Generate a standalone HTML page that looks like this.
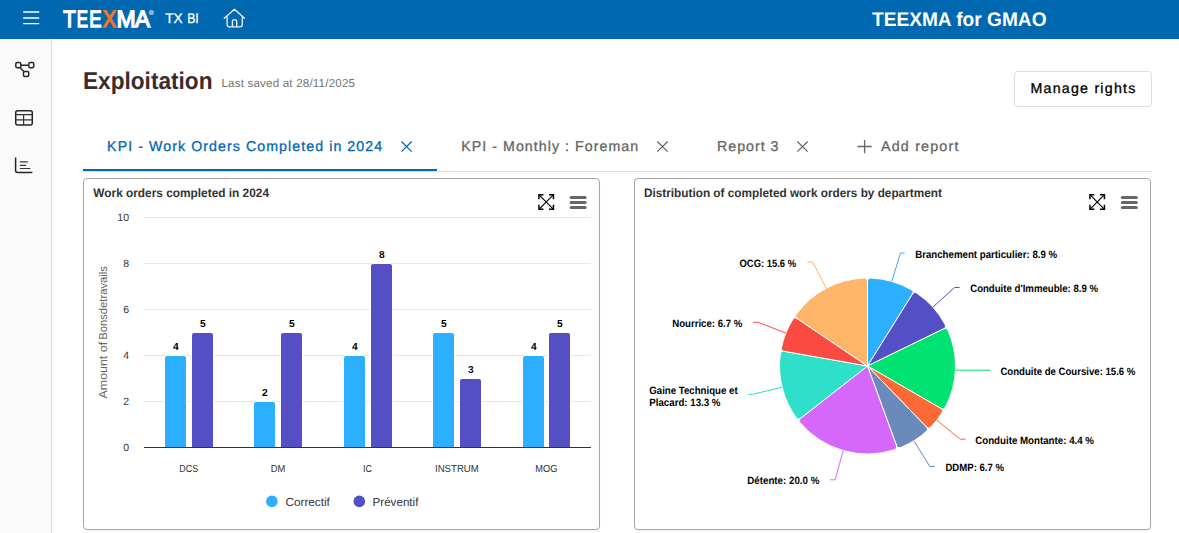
<!DOCTYPE html>
<html><head><meta charset="utf-8"><title>TEEXMA TX BI</title>
<style>
html,body{margin:0;padding:0;background:#fff;}
body{width:1179px;height:533px;overflow:hidden;position:relative;font-family:"Liberation Sans",sans-serif;}
.hdr{position:absolute;left:0;top:0;width:1179px;height:39px;background:#0067b1;}
.side{position:absolute;left:0;top:39px;width:51px;height:494px;background:#fafafa;border-right:1px solid #e0e0e0;}
.btn{position:absolute;left:1014px;top:71px;width:136px;height:34px;border:1px solid #dcdcdc;border-radius:3.5px;background:#fff;}
.tabline{position:absolute;left:83px;top:171px;width:1069px;height:1px;background:#dedede;}
.ink{position:absolute;left:83px;top:169px;width:354px;height:2px;background:#0067b1;}
.card{position:absolute;top:178px;width:515px;height:350px;border:1px solid #aaa5a5;border-radius:4px;background:#fff;box-shadow:0 1px 2px rgba(0,0,0,0.06);}
svg{position:absolute;left:0;top:0;}
text{font-family:"Liberation Sans",sans-serif;text-rendering:geometricPrecision;}
</style></head><body>
<div class="hdr"></div>
<div class="side"></div>
<div class="btn"></div>
<div class="tabline"></div>
<div class="ink"></div>
<div class="card" style="left:83px"></div>
<div class="card" style="left:634px"></div>
<svg width="1179" height="533" viewBox="0 0 1179 533">
<rect x="23.2" y="11.25" width="16" height="1.5" fill="#ffffff"/>
<rect x="23.2" y="17.25" width="16" height="1.5" fill="#ffffff"/>
<rect x="23.2" y="23" width="16" height="1.25" fill="#ffffff"/>
<text transform="translate(63.29,27.15) scale(0.792,0.9157)" font-size="25.9" font-weight="normal" fill="#fff" stroke="#fff" stroke-width="1.5" stroke-linejoin="miter">T</text>
<text transform="translate(76.77,27.15) scale(0.648,0.9157)" font-size="25.9" font-weight="normal" fill="#fff" stroke="#fff" stroke-width="1.5" stroke-linejoin="miter">E</text>
<text transform="translate(89.34,27.15) scale(0.712,0.9157)" font-size="25.9" font-weight="normal" fill="#fff" stroke="#fff" stroke-width="1.5" stroke-linejoin="miter">E</text>
<text transform="translate(102.70,27.15) scale(0.774,0.9157)" font-size="25.9" font-weight="normal" fill="#f47521" stroke="#f47521" stroke-width="1.5" stroke-linejoin="miter">X</text>
<clipPath id="xc"><rect x="109.6" y="9" width="8" height="8.5"/></clipPath>
<text clip-path="url(#xc)" transform="translate(102.70,27.15) scale(0.774,0.9157)" font-size="25.9" font-weight="normal" fill="#f9a36a" stroke="#f9a36a" stroke-width="1.5">X</text>
<text transform="translate(116.56,27.15) scale(0.889,0.9157)" font-size="25.9" font-weight="normal" fill="#fff" stroke="#fff" stroke-width="1.5" stroke-linejoin="miter">M</text>
<text transform="translate(135.11,27.15) scale(0.868,0.9157)" font-size="25.9" font-weight="normal" fill="#fff" stroke="#fff" stroke-width="1.5" stroke-linejoin="miter">A</text>
<circle cx="151.4" cy="12.4" r="2.6" fill="#fff" fill-opacity="0.5"/>
<text x="165.2" y="22.9" font-size="14" fill="#fff" font-weight="normal" text-anchor="start" textLength="17.4" lengthAdjust="spacingAndGlyphs" stroke="#fff" stroke-width="0.3">TX</text>
<text x="187.2" y="22.9" font-size="14" fill="#fff" font-weight="normal" text-anchor="start" textLength="11.6" lengthAdjust="spacingAndGlyphs" stroke="#fff" stroke-width="0.3">BI</text>
<path d="M224.3 18.3 L234.4 9.3 L244.5 18.3 M227.1 16.5 V24.5 Q227.1 26.9 229.5 26.9 H239.9 Q242.3 26.9 242.3 24.5 V16.5 M232.4 26.9 V21.2 Q232.4 19.9 233.7 19.9 H235.4 Q236.7 19.9 236.7 21.2 V26.9" fill="none" stroke="#fff" stroke-opacity="0.92" stroke-width="1.3" stroke-linejoin="round" stroke-linecap="round"/>
<text x="872" y="26.3" font-size="19.8" fill="#fff" font-weight="bold" text-anchor="start" textLength="174.5" lengthAdjust="spacingAndGlyphs" >TEEXMA for GMAO</text>
<rect x="15.8" y="62.5" width="5" height="5.2" rx="1.5" fill="none" stroke="#262626" stroke-width="1.5"/>
<rect x="28.8" y="62.5" width="5" height="5.2" rx="1.5" fill="none" stroke="#262626" stroke-width="1.5"/>
<rect x="23.5" y="71.5" width="5.2" height="5" rx="1.2" fill="none" stroke="#262626" stroke-width="1.5"/>
<path d="M20.8 65.2 H28.8 M20 67.5 L23.8 71.5" fill="none" stroke="#262626" stroke-width="1.5"/>
<rect x="15.7" y="110.7" width="16.6" height="14.2" rx="2" fill="none" stroke="#262626" stroke-width="1.5"/>
<path d="M15.7 114.6 H32.3 M15.7 119.8 H32.3 M23.6 114.6 V124.9" fill="none" stroke="#333" stroke-width="1.2"/>
<path d="M15.6 157.5 V170.5 Q15.6 172.4 17.5 172.4 H32.4" fill="none" stroke="#262626" stroke-width="1.5"/>
<path d="M19.8 161.8 H27.8 M19.8 165.3 H26 M19.8 168.5 H30.4" fill="none" stroke="#333" stroke-width="1.2"/>
<text x="83" y="88.8" font-size="24.2" fill="#3a2d2d" font-weight="bold" text-anchor="start" textLength="129.5" lengthAdjust="spacingAndGlyphs" >Exploitation</text>
<text x="221.4" y="86.9" font-size="11.6" fill="#737373" font-weight="normal" text-anchor="start" textLength="133.6" lengthAdjust="spacing" >Last saved at 28/11/2025</text>
<text x="1030.5" y="93" font-size="14.2" fill="#000" font-weight="normal" text-anchor="start" textLength="104.8" lengthAdjust="spacing" stroke="#000" stroke-width="0.3">Manage rights</text>
<text x="107.1" y="151" font-size="14.2" fill="#0067b1" font-weight="normal" text-anchor="start" textLength="275" lengthAdjust="spacing" stroke="#0067b1" stroke-width="0.3">KPI - Work Orders Completed in 2024</text>
<text x="461.2" y="151" font-size="14.2" fill="#666" font-weight="normal" text-anchor="start" textLength="177" lengthAdjust="spacing" stroke="#666" stroke-width="0.3">KPI - Monthly : Foreman</text>
<text x="717.1" y="151" font-size="14.2" fill="#666" font-weight="normal" text-anchor="start" textLength="61.3" lengthAdjust="spacing" stroke="#666" stroke-width="0.3">Report 3</text>
<text x="881" y="151" font-size="14.2" fill="#666" font-weight="normal" text-anchor="start" textLength="77.4" lengthAdjust="spacing" stroke="#666" stroke-width="0.3">Add report</text>
<path d="M401.5 141.5 L411.7 151.6 M411.7 141.5 L401.5 151.6" stroke="#0067b1" stroke-width="1.25" fill="none"/>
<path d="M657.3 141.5 L667.7 151.6 M667.7 141.5 L657.3 151.6" stroke="#666" stroke-width="1.25" fill="none"/>
<path d="M797.3 141.5 L807.7 151.6 M807.7 141.5 L797.3 151.6" stroke="#666" stroke-width="1.25" fill="none"/>
<path d="M864.6 140 V153.3 M857.5 146.5 H871.7" stroke="#666" stroke-width="1.3" fill="none"/>
<path d="M538.95 199.2 V194.75 H543.4000000000001 M549.0 194.75 H553.45 V199.2 M553.45 204.8 V209.25 H549.0 M543.4000000000001 209.25 H538.95 V204.8" stroke="#000" fill="none" stroke-width="1.5"/>
<path d="M539.4000000000001 195.2 L553.0 208.8 M553.0 195.2 L539.4000000000001 208.8" stroke="#000" fill="none" stroke-width="1.15"/>
<path d="M571.1 197.5 H585.1" stroke="#666" stroke-width="3" stroke-linecap="round"/>
<path d="M571.1 202.5 H585.1" stroke="#666" stroke-width="3" stroke-linecap="round"/>
<path d="M571.1 207.5 H585.1" stroke="#666" stroke-width="3" stroke-linecap="round"/>
<path d="M1089.95 199.2 V194.75 H1094.4 M1100.0 194.75 H1104.45 V199.2 M1104.45 204.8 V209.25 H1100.0 M1094.4 209.25 H1089.95 V204.8" stroke="#000" fill="none" stroke-width="1.5"/>
<path d="M1090.4 195.2 L1104.0 208.8 M1104.0 195.2 L1090.4 208.8" stroke="#000" fill="none" stroke-width="1.15"/>
<path d="M1122.3 197.6 H1136.3" stroke="#666" stroke-width="3" stroke-linecap="round"/>
<path d="M1122.3 202.6 H1136.3" stroke="#666" stroke-width="3" stroke-linecap="round"/>
<path d="M1122.3 207.6 H1136.3" stroke="#666" stroke-width="3" stroke-linecap="round"/>
<text x="93.3" y="196.8" font-size="12.2" fill="#333" font-weight="bold" text-anchor="start" textLength="175.7" lengthAdjust="spacingAndGlyphs" >Work orders completed in 2024</text>
<path d="M144 401.5 H591" stroke="#e6e6e6" stroke-width="1"/>
<text x="129" y="405.0" font-size="10.5" fill="#333" font-weight="normal" text-anchor="end" >2</text>
<path d="M144 355.5 H591" stroke="#e6e6e6" stroke-width="1"/>
<text x="129" y="359.0" font-size="10.5" fill="#333" font-weight="normal" text-anchor="end" >4</text>
<path d="M144 309.5 H591" stroke="#e6e6e6" stroke-width="1"/>
<text x="129" y="313.0" font-size="10.5" fill="#333" font-weight="normal" text-anchor="end" >6</text>
<path d="M144 263.5 H591" stroke="#e6e6e6" stroke-width="1"/>
<text x="129" y="267.0" font-size="10.5" fill="#333" font-weight="normal" text-anchor="end" >8</text>
<path d="M144 217.5 H591" stroke="#e6e6e6" stroke-width="1"/>
<text x="129" y="221.0" font-size="10.5" fill="#333" font-weight="normal" text-anchor="end" >10</text>
<text x="129" y="451" font-size="10.5" fill="#333" font-weight="normal" text-anchor="end" >0</text>
<text x="188.7" y="471.9" font-size="10.2" fill="#333" font-weight="normal" text-anchor="middle" textLength="18.8" lengthAdjust="spacingAndGlyphs" >DCS</text>
<path d="M164.5 448 V358.0 Q164.5 355.5 167.0 355.5 H184.0 Q186.5 355.5 186.5 358.0 V448 Z" fill="#2caffe" stroke="#fff" stroke-width="1"/>
<text x="175.8" y="350" font-size="10.2" fill="#000" font-weight="bold" text-anchor="middle" >4</text>
<path d="M191.5 448 V335.0 Q191.5 332.5 194.0 332.5 H211.0 Q213.5 332.5 213.5 335.0 V448 Z" fill="#544fc5" stroke="#fff" stroke-width="1"/>
<text x="202.8" y="327" font-size="10.2" fill="#000" font-weight="bold" text-anchor="middle" >5</text>
<text x="278.1" y="471.9" font-size="10.2" fill="#333" font-weight="normal" text-anchor="middle" textLength="14.5" lengthAdjust="spacingAndGlyphs" >DM</text>
<path d="M253.5 448 V404.0 Q253.5 401.5 256.0 401.5 H273.0 Q275.5 401.5 275.5 404.0 V448 Z" fill="#2caffe" stroke="#fff" stroke-width="1"/>
<text x="264.8" y="396" font-size="10.2" fill="#000" font-weight="bold" text-anchor="middle" >2</text>
<path d="M280.5 448 V335.0 Q280.5 332.5 283.0 332.5 H300.0 Q302.5 332.5 302.5 335.0 V448 Z" fill="#544fc5" stroke="#fff" stroke-width="1"/>
<text x="291.8" y="327" font-size="10.2" fill="#000" font-weight="bold" text-anchor="middle" >5</text>
<text x="367.5" y="471.9" font-size="10.2" fill="#333" font-weight="normal" text-anchor="middle" textLength="8.8" lengthAdjust="spacingAndGlyphs" >IC</text>
<path d="M343.5 448 V358.0 Q343.5 355.5 346.0 355.5 H363.0 Q365.5 355.5 365.5 358.0 V448 Z" fill="#2caffe" stroke="#fff" stroke-width="1"/>
<text x="354.8" y="350" font-size="10.2" fill="#000" font-weight="bold" text-anchor="middle" >4</text>
<path d="M370.5 448 V266.0 Q370.5 263.5 373.0 263.5 H390.0 Q392.5 263.5 392.5 266.0 V448 Z" fill="#544fc5" stroke="#fff" stroke-width="1"/>
<text x="381.8" y="258" font-size="10.2" fill="#000" font-weight="bold" text-anchor="middle" >8</text>
<text x="456.9" y="471.9" font-size="10.2" fill="#333" font-weight="normal" text-anchor="middle" textLength="43.8" lengthAdjust="spacingAndGlyphs" >INSTRUM</text>
<path d="M432.5 448 V335.0 Q432.5 332.5 435.0 332.5 H452.0 Q454.5 332.5 454.5 335.0 V448 Z" fill="#2caffe" stroke="#fff" stroke-width="1"/>
<text x="443.8" y="327" font-size="10.2" fill="#000" font-weight="bold" text-anchor="middle" >5</text>
<path d="M459.5 448 V381.0 Q459.5 378.5 462.0 378.5 H479.0 Q481.5 378.5 481.5 381.0 V448 Z" fill="#544fc5" stroke="#fff" stroke-width="1"/>
<text x="470.8" y="373" font-size="10.2" fill="#000" font-weight="bold" text-anchor="middle" >3</text>
<text x="546.3" y="471.9" font-size="10.2" fill="#333" font-weight="normal" text-anchor="middle" textLength="22.2" lengthAdjust="spacingAndGlyphs" >MOG</text>
<path d="M522.5 448 V358.0 Q522.5 355.5 525.0 355.5 H542.0 Q544.5 355.5 544.5 358.0 V448 Z" fill="#2caffe" stroke="#fff" stroke-width="1"/>
<text x="533.8" y="350" font-size="10.2" fill="#000" font-weight="bold" text-anchor="middle" >4</text>
<path d="M548.5 448 V335.0 Q548.5 332.5 551.0 332.5 H568.0 Q570.5 332.5 570.5 335.0 V448 Z" fill="#544fc5" stroke="#fff" stroke-width="1"/>
<text x="559.8" y="327" font-size="10.2" fill="#000" font-weight="bold" text-anchor="middle" >5</text>
<path d="M144 447.5 H591" stroke="#333" stroke-width="1"/>
<text transform="translate(107.3,398.4) rotate(-90)" font-size="11.5" fill="#666" textLength="56.5" lengthAdjust="spacingAndGlyphs">Amount of</text>
<text transform="translate(107.3,339.8) rotate(-90)" font-size="11.5" fill="#666" textLength="73.8" lengthAdjust="spacingAndGlyphs">Bonsdetravails</text>
<circle cx="271.9" cy="501.4" r="5.8" fill="#2caffe"/>
<text x="285.5" y="506.1" font-size="11.8" fill="#333" font-weight="normal" text-anchor="start" textLength="44.3" lengthAdjust="spacingAndGlyphs" >Correctif</text>
<circle cx="359.3" cy="501.4" r="5.8" fill="#544fc5"/>
<text x="372.5" y="506.1" font-size="11.8" fill="#333" font-weight="normal" text-anchor="start" textLength="45.9" lengthAdjust="spacingAndGlyphs" >Préventif</text>
<text x="644" y="197.2" font-size="12.2" fill="#333" font-weight="bold" text-anchor="start" textLength="297.8" lengthAdjust="spacingAndGlyphs" >Distribution of completed work orders by department</text>
<path d="M867.5 366 L867.50 281.00 Q867.50 278.00 870.50 278.05 A88 88 0 0 1 911.56 289.83 Q914.13 291.37 912.54 293.92 Z" fill="#2caffe" stroke="#fff" stroke-width="1" stroke-linejoin="round"/>
<path d="M867.5 366 L912.54 293.92 Q914.13 291.37 916.65 293.00 A88 88 0 0 1 945.23 324.75 Q946.59 327.42 943.90 328.74 Z" fill="#544fc5" stroke="#fff" stroke-width="1" stroke-linejoin="round"/>
<path d="M867.5 366 L943.90 328.74 Q946.59 327.42 947.86 330.14 A88 88 0 0 1 945.17 407.38 Q943.71 410.00 941.11 408.50 Z" fill="#00e272" stroke="#fff" stroke-width="1" stroke-linejoin="round"/>
<path d="M867.5 366 L941.11 408.50 Q943.71 410.00 942.17 412.57 A88 88 0 0 1 930.75 427.18 Q928.63 429.30 926.55 427.14 Z" fill="#fe6a35" stroke="#fff" stroke-width="1" stroke-linejoin="round"/>
<path d="M867.5 366 L926.55 427.14 Q928.63 429.30 926.44 431.35 A88 88 0 0 1 900.40 447.62 Q897.60 448.69 896.57 445.87 Z" fill="#6b8abc" stroke="#fff" stroke-width="1" stroke-linejoin="round"/>
<path d="M867.5 366 L896.57 445.87 Q897.60 448.69 894.76 449.67 A88 88 0 0 1 800.04 422.51 Q798.16 420.18 800.52 418.33 Z" fill="#d568fb" stroke="#fff" stroke-width="1" stroke-linejoin="round"/>
<path d="M867.5 366 L800.52 418.33 Q798.16 420.18 796.35 417.78 A88 88 0 0 1 780.37 353.68 Q780.84 350.72 783.79 351.24 Z" fill="#2ee0ca" stroke="#fff" stroke-width="1" stroke-linejoin="round"/>
<path d="M867.5 366 L783.79 351.24 Q780.84 350.72 781.41 347.77 A88 88 0 0 1 792.91 319.31 Q794.54 316.79 797.03 318.47 Z" fill="#fa4b42" stroke="#fff" stroke-width="1" stroke-linejoin="round"/>
<path d="M867.5 366 L797.03 318.47 Q794.54 316.79 796.26 314.33 A88 88 0 0 1 864.50 278.05 Q867.50 278.00 867.50 281.00 Z" fill="#feb56a" stroke="#fff" stroke-width="1" stroke-linejoin="round"/>
<path d="M891.8 281.4 L900.5 253 L904.6 253" fill="none" stroke="#2caffe" stroke-width="1"/>
<path d="M932.9 307.1 L954.5 287.5 L959.6 287.5" fill="none" stroke="#544fc5" stroke-width="1"/>
<path d="M955.4 370.2 L990.4 370.2" fill="none" stroke="#00e272" stroke-width="1"/>
<path d="M936.8 420.2 L960.2 439.2 L965.4 439.2" fill="none" stroke="#fe6a35" stroke-width="1"/>
<path d="M914.1 441.2 L929.8 466.4 L934.9 466.4" fill="none" stroke="#6b8abc" stroke-width="1"/>
<path d="M843.2 450.6 L835.1 479.8 L830.2 479.8" fill="none" stroke="#d568fb" stroke-width="1"/>
<path d="M782.1 387.3 L752.2 394.4 L748.5 394.4" fill="none" stroke="#2ee0ca" stroke-width="1"/>
<path d="M785.9 333 L758 322.3 L753.2 322.3" fill="none" stroke="#fa4b42" stroke-width="1"/>
<path d="M826.2 288.3 L812.6 262 L807.4 262" fill="none" stroke="#feb56a" stroke-width="1"/>
<text x="915.2" y="258.4" font-size="10.6" fill="#000" font-weight="bold" text-anchor="start" textLength="142" lengthAdjust="spacingAndGlyphs" >Branchement particulier: 8.9 %</text>
<text x="970.2" y="292.4" font-size="10.6" fill="#000" font-weight="bold" text-anchor="start" textLength="127.8" lengthAdjust="spacingAndGlyphs" >Conduite d&#39;Immeuble: 8.9 %</text>
<text x="1000.4" y="375.4" font-size="10.6" fill="#000" font-weight="bold" text-anchor="start" textLength="135" lengthAdjust="spacingAndGlyphs" >Conduite de Coursive: 15.6 %</text>
<text x="975.2" y="444.2" font-size="10.6" fill="#000" font-weight="bold" text-anchor="start" textLength="118.8" lengthAdjust="spacingAndGlyphs" >Conduite Montante: 4.4 %</text>
<text x="945.4" y="471.0" font-size="10.6" fill="#000" font-weight="bold" text-anchor="start" textLength="58.7" lengthAdjust="spacingAndGlyphs" >DDMP: 6.7 %</text>
<text x="747.3" y="484.1" font-size="10.6" fill="#000" font-weight="bold" text-anchor="start" textLength="72" lengthAdjust="spacingAndGlyphs" >Détente: 20.0 %</text>
<text x="649.3" y="394.4" font-size="10.6" fill="#000" font-weight="bold" text-anchor="start" textLength="88.3" lengthAdjust="spacingAndGlyphs" >Gaine Technique et</text>
<text x="649.3" y="406.1" font-size="10.6" fill="#000" font-weight="bold" text-anchor="start" textLength="71.2" lengthAdjust="spacingAndGlyphs" >Placard: 13.3 %</text>
<text x="672.2" y="327.2" font-size="10.6" fill="#000" font-weight="bold" text-anchor="start" textLength="70.2" lengthAdjust="spacingAndGlyphs" >Nourrice: 6.7 %</text>
<text x="739.5" y="267.3" font-size="10.6" fill="#000" font-weight="bold" text-anchor="start" textLength="56.6" lengthAdjust="spacingAndGlyphs" >OCG: 15.6 %</text>
</svg>
</body></html>
